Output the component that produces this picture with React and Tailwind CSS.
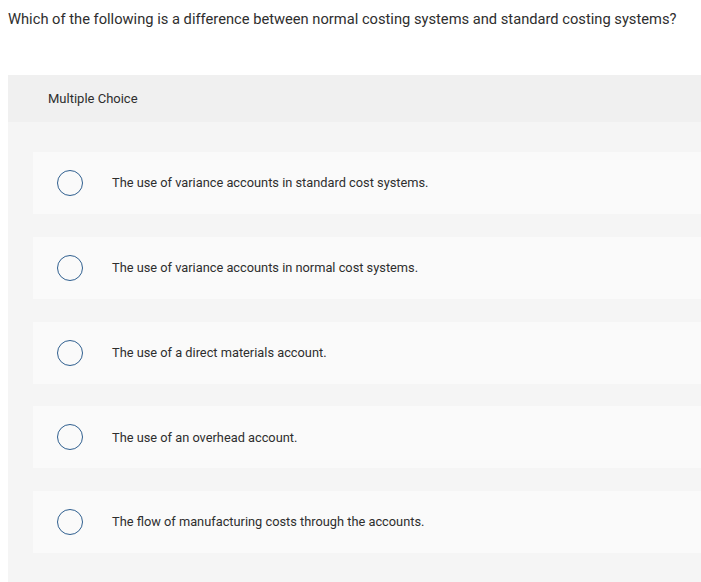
export default function App() {
  const options = [
    "The use of variance accounts in standard cost systems.",
    "The use of variance accounts in normal cost systems.",
    "The use of a direct materials account.",
    "The use of an overhead account.",
    "The flow of manufacturing costs through the accounts.",
  ];
  return (
    <div className="w-[701px] h-[582px] bg-white overflow-hidden" style={{ fontFamily: "Roboto, 'Open Sans', sans-serif" }}>
      <p className="pl-[8px] pt-[9px] text-[14.7px] leading-[20px] text-[#2e2e2e]">
        Which of the following is a difference between normal costing systems and standard costing systems?
      </p>
      <div className="ml-[8px] mt-[46px]">
        <div className="h-[47px] bg-[#f0f0f0] pl-[40px] flex items-center text-[13px] text-[#2e2e2e]">
          Multiple Choice
        </div>
        <div className="bg-[#f5f5f5] pt-[30px] pb-[29px] pl-[25px] flex flex-col gap-[22.75px]">
          {options.map((o) => (
            <div key={o} className="h-[62px] bg-[#fafafa] flex items-center pl-[24px]">
              <span className="w-[26px] h-[26px] rounded-full border-[1.5px] border-[#2f5f8f] shrink-0" />
              <span className="ml-[29px] text-[12.8px] text-[#2e2e2e]">{o}</span>
            </div>
          ))}
        </div>
      </div>
    </div>
  );
}
